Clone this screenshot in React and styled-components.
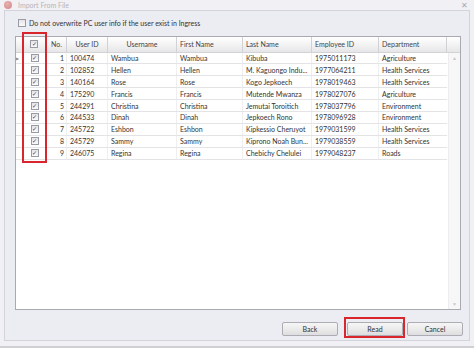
import React from 'react';
import styled, { createGlobalStyle } from 'styled-components';

const GlobalStyle = createGlobalStyle`
  html, body {
    margin: 0;
    padding: 0;
    background: #c9c9cf;
  }
  * { box-sizing: border-box; }
`;

const FONT = `'Lato', 'Open Sans', 'Liberation Sans', sans-serif`;
const TEXT = '7px';

const Window = styled.div`
  position: relative;
  width: 474px;
  height: 348px;
  display: flex;
  flex-direction: column;
  background: #f1f1f5;
  font-family: ${FONT};
  color: #333;
  overflow: hidden;
`;

const TitleBar = styled.div`
  height: 12px;
  display: flex;
  align-items: center;
  padding: 0 6px 0 4px;
  gap: 6px;
`;

const AppIcon = styled.span`
  width: 8px;
  height: 8px;
  border-radius: 50%;
  background: radial-gradient(circle at 40% 35%, #e7a1a1, #c96a6a);
  opacity: 0.8;
`;

const Title = styled.span`
  font-size: ${TEXT};
  color: #b4b4bc;
  flex: 1;
`;

const Close = styled.span`
  font-size: 8px;
  color: #a8a8b0;
  line-height: 1;
`;

const Client = styled.div`
  flex: 1;
  margin: 0 4px 5px 4px;
  border: 1px solid #d3d3dc;
  background: #ececf3;
  display: flex;
  flex-direction: column;
  padding: 7px 6px 4px 10px;
`;

const OptionRow = styled.label`
  display: flex;
  align-items: center;
  gap: 3px;
  margin-left: 3px;
  font-size: ${TEXT};
  color: #333;
  height: 10px;
`;

const Box = styled.span`
  width: 8px;
  height: 8px;
  border: 1px solid #9a9aa4;
  background: linear-gradient(#e4e4e9, #fafafa);
  display: inline-flex;
  align-items: center;
  justify-content: center;
  font-size: 6px;
  line-height: 1;
  color: #2f3f6f;
  flex-shrink: 0;
`;

const Table = styled.div`
  margin-top: 8px;
  height: 274px;
  width: 446px;
  border: 1px solid #a9a9b0;
  background: #fff;
  display: flex;
  flex-direction: column;
`;

const COLS = '6px 25px 20px 41px 69px 66px 69px 67px 68px 13px';

const HeaderRow = styled.div`
  display: grid;
  grid-template-columns: ${COLS};
  height: 16px;
  background: linear-gradient(#ffffff, #f2f2f2 55%, #e6e6e8);
  border-bottom: 1px solid #d3d3d6;
`;

const HeadCell = styled.div`
  display: flex;
  align-items: center;
  justify-content: ${p => (p.$center ? 'center' : 'flex-start')};
  padding-left: ${p => (p.$center ? '0' : '3px')};
  font-size: ${TEXT};
  color: #444;
  border-right: ${p => (p.$sep ? '1px solid #d2d2d6' : 'none')};
  white-space: nowrap;
`;

const Body = styled.div`
  flex: 1;
  display: flex;
`;

const Rows = styled.div`
  width: 431px;
`;

const Row = styled.div`
  display: grid;
  grid-template-columns: 6px 25px 20px 41px 69px 66px 69px 67px 68px;
  height: 11.9px;
  border-bottom: 1px solid #e4e4e6;
`;

const Cell = styled.div`
  display: flex;
  align-items: center;
  justify-content: ${p => (p.$align === 'right' ? 'flex-end' : p.$align === 'center' ? 'center' : 'flex-start')};
  padding: 0 2px 0 3px;
  font-size: ${TEXT};
  color: #333;
  white-space: nowrap;
  overflow: hidden;
  border-right: ${p => (p.$sep ? '1px solid #efeff1' : 'none')};
`;

const RowMarker = styled.div`
  display: flex;
  align-items: center;
  font-size: 4px;
  color: #888;
  padding-left: 1px;
  margin-left: -1px;
`;

const Scroll = styled.div`
  width: 13px;
  margin-left: 1px;
  background: #f7f7f8;
  border-left: 1px solid #ededf0;
  display: flex;
  flex-direction: column;
  justify-content: space-between;
  align-items: center;
  padding: 2px 0;
  font-size: 5px;
  color: #c8c8cc;
`;

const ButtonRow = styled.div`
  display: flex;
  justify-content: flex-end;
  gap: 4px;
  margin-top: 12px;
`;

const Button = styled.button`
  position: relative;
  width: 56px;
  height: 14px;
  margin-left: ${p => (p.$marked ? '5px' : '0')};
  border: 1px solid #acacb2;
  border-radius: 2px;
  background: linear-gradient(#f6f6f6, #ebebeb 50%, #dedee0);
  font-family: ${FONT};
  font-size: ${TEXT};
  color: #333;
  padding: 0;

  &::after {
    content: '';
    display: ${p => (p.$marked ? 'block' : 'none')};
    position: absolute;
    left: -4px;
    right: -3px;
    top: -6px;
    bottom: -3px;
    border: 2px solid #d8262c;
  }
`;

const ColumnMark = styled.div`
  position: absolute;
  left: 22px;
  top: 32px;
  width: 25px;
  height: 131px;
  border: 2px solid #d8262c;
  pointer-events: none;
`;

const BottomEdge = styled.div`
  height: 3px;
  background: #cfcfd4;
`;

const users = [
  [1, '100474', 'Wambua', 'Wambua', 'Kibuba', '1975011173', 'Agriculture'],
  [2, '102852', 'Hellen', 'Hellen', 'M. Kaguongo Indu...', '1977064211', 'Health Services'],
  [3, '140164', 'Rose', 'Rose', 'Kogo Jepkoech', '1978019463', 'Health Services'],
  [4, '175290', 'Francis', 'Francis', 'Mutende Mwanza', '1978027076', 'Agriculture'],
  [5, '244291', 'Christina', 'Christina', 'Jemutai Toroitich', '1978037796', 'Environment'],
  [6, '244533', 'Dinah', 'Dinah', 'Jepkoech Rono', '1978096928', 'Environment'],
  [7, '245722', 'Eshbon', 'Eshbon', 'Kipkessio Cheruyot', '1979031599', 'Health Services'],
  [8, '245729', 'Sammy', 'Sammy', 'Kiprono Noah Bun...', '1979038559', 'Health Services'],
  [9, '246075', 'Regina', 'Regina', 'Chebichy Chelulei', '1979048237', 'Roads'],
];

const App = () => {
  return (
    <>
      <GlobalStyle />
      <Window>
        <TitleBar>
          <AppIcon />
          <Title>Import From File</Title>
          <Close>✕</Close>
        </TitleBar>
        <Client>
          <OptionRow>
            <Box />
            Do not overwrite PC user info if the user exist in Ingress
          </OptionRow>
          <Table>
            <HeaderRow>
              <HeadCell />
              <HeadCell $center $sep><Box>✓</Box></HeadCell>
              <HeadCell $center $sep>No.</HeadCell>
              <HeadCell $center $sep>User ID</HeadCell>
              <HeadCell $center $sep>Username</HeadCell>
              <HeadCell $sep>First Name</HeadCell>
              <HeadCell $sep>Last Name</HeadCell>
              <HeadCell $sep>Employee ID</HeadCell>
              <HeadCell $sep>Department</HeadCell>
              <HeadCell />
            </HeaderRow>
            <Body>
              <Rows>
                {users.map(u => (
                  <Row key={u[0]}>
                    <RowMarker>{u[0] === 1 ? '▶' : ''}</RowMarker>
                    <Cell $align="center" $sep><Box>✓</Box></Cell>
                    <Cell $align="right" $sep>{u[0]}</Cell>
                    <Cell $sep>{u[1]}</Cell>
                    <Cell $sep>{u[2]}</Cell>
                    <Cell $sep>{u[3]}</Cell>
                    <Cell $sep>{u[4]}</Cell>
                    <Cell $sep>{u[5]}</Cell>
                    <Cell>{u[6]}</Cell>
                  </Row>
                ))}
              </Rows>
              <Scroll>
                <span>▲</span>
                <span>▼</span>
              </Scroll>
            </Body>
          </Table>
          <ButtonRow>
            <Button>Back</Button>
            <Button $marked>Read</Button>
            <Button>Cancel</Button>
          </ButtonRow>
        </Client>
        <BottomEdge />
        <ColumnMark />
      </Window>
    </>
  );
};

export default App;
